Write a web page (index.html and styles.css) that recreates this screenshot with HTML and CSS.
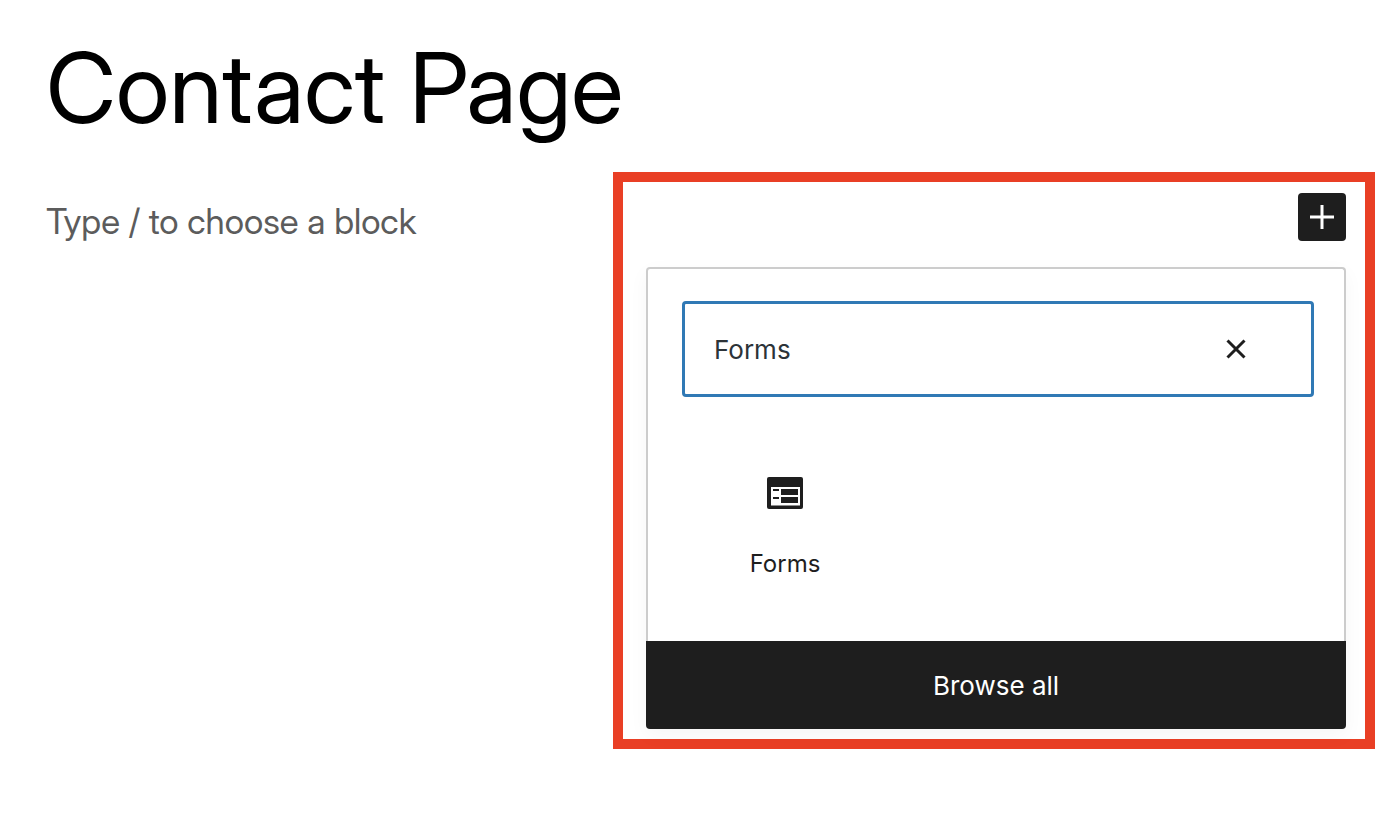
FILE: index.html
```html
<!DOCTYPE html>
<html lang="en">
<head>
<meta charset="utf-8">
<meta name="viewport" content="width=device-width, initial-scale=1">
<title>Contact Page</title>
<link rel="stylesheet" href="styles.css">
</head>
<body>
<main class="editor">
  <h1 class="title">Contact Page</h1>
  <div class="canvas">
    <p class="prompt">Type / to choose a block</p>
    <section class="highlight" aria-label="Block inserter">
      <button class="add" type="button" aria-label="Add block">
        <svg width="48" height="48" viewBox="0 0 48 48" aria-hidden="true"><path d="M24 12v24M12 24h24" stroke="#fff" stroke-width="3"/></svg>
      </button>
      <div class="popover">
        <div class="content">
          <div class="search">
            <input class="field" type="text" aria-label="Search for a block" value="Forms">
            <button class="clear" type="button" aria-label="Reset search">
              <svg width="24" height="24" viewBox="0 0 24 24" aria-hidden="true"><path d="M3.500 3.500l17 17M20.500 3.500l-17 17" stroke="#1e1e1e" stroke-width="3"/></svg>
            </button>
          </div>
          <button class="block" type="button">
            <svg width="36" height="32" viewBox="0 0 36 32" aria-hidden="true"><rect width="36" height="32" rx="2" fill="#1e1e1e"/><path d="M4 10h29v18.500H4z" fill="#fff"/><path d="M6 12h6v2H6zM6 20h6v2H6zM14 12h17v6H14zM14 20h17v6H14z" fill="#1e1e1e"/></svg>
            <span>Forms</span>
          </button>
        </div>
        <button class="browse" type="button">Browse all</button>
      </div>
    </section>
  </div>
</main>
</body>
</html>
```
FILE: styles.css
```css
* { box-sizing: border-box; }
body { margin: 0; background: #fff; color: #1e1e1e; font-family: Inter, "Liberation Sans", sans-serif; }
button { font: inherit; border: 0; padding: 0; cursor: pointer; }
svg { display: block; }
.editor { padding: 28px 21px 0 46px; }
.title, .prompt { font-family: "Inter Display", Inter, sans-serif; font-weight: 400; }
.title { margin: 0; font-size: 97px; line-height: 120px; color: #000; }
.canvas { display: grid; grid-template-columns: minmax(0, 567fr) minmax(0, 762fr); align-items: start; margin-top: 24px; }
.prompt { margin: 28px 0 0; font-size: 35px; line-height: 42px; color: #5c5c5c; }
.highlight { display: flex; flex-direction: column; border: 10px solid #e93f25; padding: 11px 19px 10px 23px; }
.add { align-self: flex-end; width: 48px; height: 48px; border-radius: 4px; background: #1e1e1e; }
.popover { margin-top: 26px; border-radius: 4px; box-shadow: 0 6px 20px rgba(0, 0, 0, 0.04); }
.content { border: 2px solid #ccc; border-bottom: 0; border-radius: 4px 4px 0 0; padding: 32px 30px 14px 34px; }
.search { display: flex; align-items: center; height: 96px; padding-right: 63px; border: 3px solid #3079b5; border-radius: 4px; }
.field { flex: 1; min-width: 0; border: 0; outline: 0; padding: 0 0 0 29px; background: none; font: inherit; font-size: 26px; color: #2c3338; }
.clear { background: none; }
.block { display: flex; flex-direction: column; align-items: center; gap: 40px; width: 206px; padding: 48px 0; margin-top: 32px; background: none; font-size: 24px; line-height: 30px; color: #1e1e1e; }
.browse { display: block; width: 100%; height: 88px; border-radius: 0 0 4px 4px; background: #1e1e1e; color: #fff; font-size: 26px; }
```
